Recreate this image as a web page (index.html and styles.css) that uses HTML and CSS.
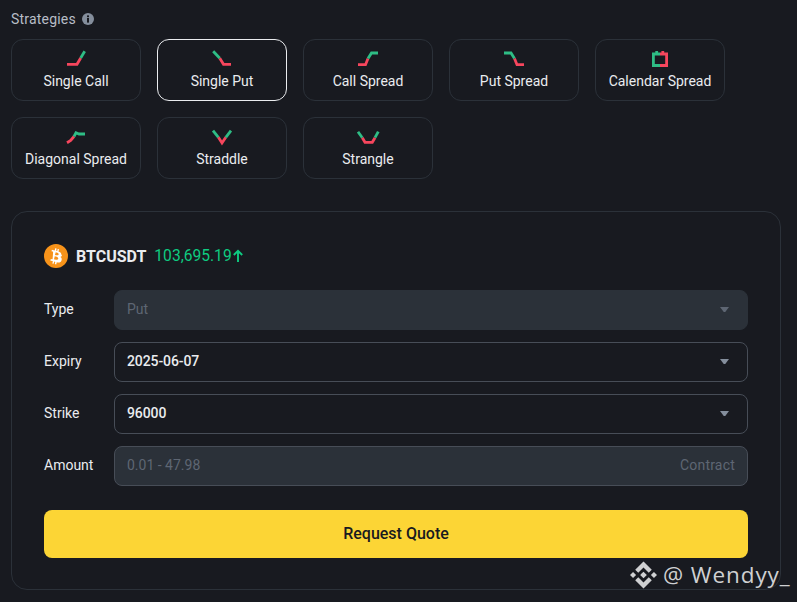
FILE: index.html
```html
<!DOCTYPE html>
<html lang="en">
<head>
<meta charset="utf-8">
<title>Strategies</title>
<link rel="stylesheet" href="styles.css">
</head>
<body>
<main class="page">
  <header class="title">
    <span>Strategies</span>
    <svg class="info" viewBox="0 0 12 12"><circle cx="6" cy="6" r="6" fill="#848e9c"/><rect x="5" y="5" width="2" height="4.6" fill="#181a20"/><rect x="5" y="2.4" width="2" height="1.8" fill="#181a20"/></svg>
  </header>
  <section class="strategies">
    <button class="card"><svg class="glyph" viewBox="0 0 20 16"><path class="r" d="M1 14.3H11L14.7 8"/><path class="g" d="M14.7 8L18.7 1.300"/></svg><span>Single Call</span></button>
    <button class="card active"><svg class="glyph" viewBox="0 0 20 16"><path class="g" d="M1.200 1.300L7.800 8.300"/><path class="r" d="M7.800 8.300L11.500 14.300H19"/></svg><span>Single Put</span></button>
    <button class="card"><svg class="glyph" viewBox="0 0 20 16"><path class="r" d="M0 14.700H7.500L10 8.500"/><path class="g" d="M10 8.500L13.500 3H20"/></svg><span>Call Spread</span></button>
    <button class="card"><svg class="glyph" viewBox="0 0 20 16"><path class="g" d="M0 3H7L10.500 8.500"/><path class="r" d="M10.500 8.500L13 14.700H20"/></svg><span>Put Spread</span></button>
    <button class="card"><svg class="glyph" viewBox="0 0 20 16"><path class="g" d="M10 4H3.400V15.500H10"/><path class="r" d="M10 4H16.600V15.500H10"/><path class="g" d="M6.700 1V4"/><path class="r" d="M12.800 1V4"/></svg><span>Calendar Spread</span></button>
    <button class="card"><svg class="glyph" viewBox="0 0 20 16"><path class="r" d="M1 14.700L4.700 12.500L8 8.500"/><path class="g" d="M8 8.500L10 4.700L13 6H19"/></svg><span>Diagonal Spread</span></button>
    <button class="card"><svg class="glyph" viewBox="0 0 20 16"><path class="g" d="M1 2.700L6.400 9.300"/><path class="r" d="M6.400 9.300L10 15L13.800 9.300"/><path class="g" d="M13.800 9.300L19 2.700"/></svg><span>Straddle</span></button>
    <button class="card"><svg class="glyph" viewBox="0 0 20 16"><path class="g" d="M0 3.700L4.300 9.700"/><path class="r" d="M4.300 9.700L7 14.300H14.300L17 9.700"/><path class="g" d="M17 9.700L20.300 3.700"/></svg><span>Strangle</span></button>
  </section>
  <section class="panel">
    <div class="ticker">
      <svg class="coin" viewBox="0 0 24 24"><circle cx="12" cy="12" r="12" fill="#f7931a"/><path fill="#fff" d="M17.200 10.400c.2-1.600-1-2.500-2.700-3l.6-2.200-1.400-.3-.5 2.100-1.100-.3.500-2.100-1.400-.3-.5 2.200-2.800-.7-.4 1.500 1 .2c.6.200.7.500.6.800L8.600 14.900c-.1.200-.3.500-.7.400l-1-.3-.7 1.600 2.700.7-.6 2.200 1.300.3.600-2.200 1.100.3-.5 2.200 1.400.3.600-2.200c2.300.4 4 .3 4.700-1.800.6-1.700 0-2.700-1.300-3.300.9-.2 1.600-.8 1.800-2zm-3 4.300c-.4 1.700-3.300.8-4.200.5l.8-3c.9.200 3.900.7 3.400 2.500zm.4-4.300c-.4 1.500-2.800.8-3.600.6l.7-2.800c.8.200 3.300.6 2.900 2.200z"/></svg>
      <strong class="pair">BTCUSDT</strong>
      <span class="price">103,695.19</span>
      <svg class="up" viewBox="0 0 12 14"><path d="M6 13V2M1.800 6L6 1.800L10.200 6" fill="none" stroke="currentColor" stroke-width="1.900"/></svg>
    </div>
    <div class="form">
      <div class="row">
        <label class="label">Type</label>
        <div class="field disabled"><span>Put</span><svg class="caret" viewBox="0 0 10 6"><path d="M0 0H10L5.800 5.600H4.200Z"/></svg></div>
      </div>
      <div class="row">
        <label class="label">Expiry</label>
        <div class="field"><span class="value">2025-06-07</span><svg class="caret" viewBox="0 0 10 6"><path d="M0 0H10L5.800 5.600H4.200Z"/></svg></div>
      </div>
      <div class="row">
        <label class="label">Strike</label>
        <div class="field"><span class="value">96000</span><svg class="caret" viewBox="0 0 10 6"><path d="M0 0H10L5.800 5.600H4.200Z"/></svg></div>
      </div>
      <div class="row">
        <label class="label">Amount</label>
        <div class="field input"><span>0.01 - 47.98</span><span class="unit">Contract</span></div>
      </div>
    </div>
    <button class="quote">Request Quote</button>
  </section>
</main>
<div class="mark">
  <svg class="mark-logo" viewBox="0 0 32 32"><path d="M9.789 13.446L16 7.235l6.214 6.214 3.613-3.614L16 0 6.175 9.825l3.614 3.62zM0 16l3.614-3.614L7.228 16l-3.614 3.614L0 16zm9.789 2.554L16 24.765l6.214-6.214 3.613 3.611-9.827 9.838-9.825-9.825-.002-.002 3.616-3.619zM24.772 16l3.614-3.614L32 16l-3.614 3.614L24.772 16zm-4.805-.003L16 12.030l-2.930 2.930-.338.336-.693.693L16 19.970l3.967-3.973z"/></svg>
  <span>@ Wendyy_</span>
</div>
</body>
</html>
```

FILE: styles.css
```css
* { box-sizing: border-box; }
html, body { margin: 0; height: 100%; }
body {
  background: #181a20;
  color: #eaecef;
  font-family: Roboto, "Liberation Sans", sans-serif;
  font-size: 14px;
  overflow: hidden;
}
.page { padding: 9px 16px 0 11px; }
.title {
  display: flex;
  align-items: center;
  gap: 6px;
  height: 20px;
  color: #b7bdc6;
  font-size: 14px;
  line-height: 20px;
  letter-spacing: 0.2px;
}
.info { width: 12px; height: 12px; }
.strategies {
  display: flex;
  flex-wrap: wrap;
  gap: 16px;
  margin-top: 10px;
  width: 730px;
}
.card {
  display: flex;
  flex-direction: column;
  align-items: center;
  width: 130px;
  height: 62px;
  padding: 10px 0 0;
  gap: 5px;
  background: transparent;
  border: 1px solid #2b3139;
  border-radius: 12px;
  color: #eaecef;
  font: inherit;
  line-height: 20px;
}
.card.active { border-color: #eaecef; }
.glyph { width: 20px; height: 16px; overflow: visible; flex: none; }
.glyph path { fill: none; stroke-width: 2.8; }
.glyph .g { stroke: #2ebd85; }
.glyph .r { stroke: #f6465d; }
.panel {
  margin-top: 32px;
  width: 770px;
  height: 379px;
  padding: 32px;
  border: 1px solid #2b3139;
  border-radius: 16px;
}
.ticker {
  display: flex;
  align-items: center;
  height: 24px;
  gap: 8px;
}
.coin { width: 24px; height: 24px; }
.pair { font-weight: 700; font-size: 16px; }
.price { color: #0ecb81; font-size: 15.600px; }
.up { width: 12px; height: 14px; color: #0ecb81; margin-left: -8px; }
.form {
  display: flex;
  flex-direction: column;
  gap: 12px;
  margin-top: 22px;
}
.row {
  display: flex;
  align-items: center;
  height: 40px;
}
.label { width: 70px; flex: none; margin-top: -2px; }
.field {
  flex: 1;
  display: flex;
  align-items: center;
  justify-content: space-between;
  height: 40px;
  padding: 0 12px;
  border: 1px solid #474d57;
  border-radius: 8px;
}
.field > span { margin-top: -2px; }
.value { font-weight: 500; letter-spacing: -0.1px; }
.unit { letter-spacing: 0.2px; }
.field.disabled, .field.input { background: #2b3139; color: #5e6673; }
.field.disabled { border-color: #2b3139; }
.caret { width: 9px; height: 5.500px; fill: #848e9c; margin-right: 6px; }
.disabled .caret { fill: #5e6673; }
.quote {
  display: block;
  width: 100%;
  height: 48px;
  margin-top: 24px;
  padding-bottom: 2px;
  background: #fcd535;
  border: 0;
  border-radius: 8px;
  color: #181a20;
  font: inherit;
  font-weight: 500;
  font-size: 16px;
}
.mark {
  position: absolute;
  left: 630px;
  top: 561px;
  display: flex;
  align-items: center;
  gap: 6px;
  color: #cfd0d2;
}
.mark-logo { width: 27px; height: 28px; fill: #cfd0d2; }
.mark span {
  font-family: "Open Sans", sans-serif;
  font-size: 22.500px;
  line-height: 28px;
  letter-spacing: 0.9px;
}
```
